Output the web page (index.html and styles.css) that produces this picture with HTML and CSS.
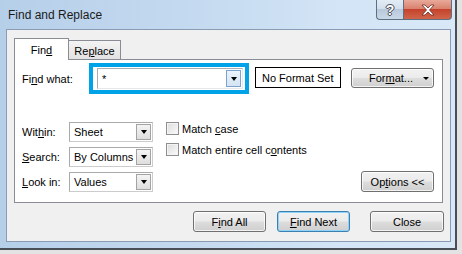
FILE: index.html
```html
<!DOCTYPE html>
<html>
<head>
<meta charset="utf-8">
<link rel="stylesheet" href="styles.css">
</head>
<body>
<div class="win">
  <div class="titlebar">
    <span class="title">Find and Replace</span>
    <div class="caption-btns">
      <div class="cbtn help">?</div>
      <div class="cbtn close">
        <svg width="16" height="12" viewBox="0 0 16 12"><path d="M2 1h3l3 3 3-3h3l-4.5 5 4.5 5h-3l-3-3-3 3h-3l4.5-5z" fill="#fff" stroke="#6b2a22" stroke-width="0.8" stroke-linejoin="round"/></svg>
      </div>
    </div>
  </div>
  <div class="client">
    <div class="tabs">
      <div class="tab active">Fin<u>d</u></div>
      <div class="tab">Re<u>p</u>lace</div>
    </div>
    <div class="panel">
      <div class="row1">
        <span class="lbl lbl-find">Fi<u>n</u>d what:</span>
        <div class="hl">
          <div class="combo wide"><span class="val">*</span><span class="ddbtn blue"><i class="tri"></i></span></div>
        </div>
        <div class="nfs">No Format Set</div>
        <div class="btn fmt"><span>For<u>m</u>at...</span><i class="tri small"></i></div>
      </div>
      <div class="lower">
        <div class="fields">
          <div class="frow"><span class="lbl">Wit<u>h</u>in:</span><div class="combo sel"><span class="val">Sheet</span><span class="ddbtn"><i class="tri"></i></span></div></div>
          <div class="frow"><span class="lbl"><u>S</u>earch:</span><div class="combo sel"><span class="val">By Columns</span><span class="ddbtn"><i class="tri"></i></span></div></div>
          <div class="frow"><span class="lbl"><u>L</u>ook in:</span><div class="combo sel"><span class="val">Values</span><span class="ddbtn"><i class="tri"></i></span></div></div>
        </div>
        <div class="checks">
          <div class="chk"><span class="box"></span><span>Match <u>c</u>ase</span></div>
          <div class="chk"><span class="box"></span><span>Match entire cell c<u>o</u>ntents</span></div>
        </div>
        <div class="btn opts">Op<u>t</u>ions &lt;&lt;</div>
      </div>
    </div>
    <div class="actions">
      <div class="btn act">F<u>i</u>nd All</div>
      <div class="btn act def"><u>F</u>ind Next</div>
      <div class="btn act close-btn">Close</div>
    </div>
  </div>
</div>
</body>
</html>
```
FILE: styles.css
```css
* { box-sizing: border-box; }
html, body { margin: 0; padding: 0; }
body {
  width: 462px;
  height: 254px;
  overflow: hidden;
  background: #e3e3e3;
  font-family: "Liberation Sans", Arial, sans-serif;
  font-size: 11px;
  color: #000;
}
u { text-decoration: underline; text-underline-offset: 1px; }

.win {
  width: 457px;
  height: 250px;
  background: linear-gradient(90deg, #b6cfe9 0%, #c3d9ef 40%, #d3e5f6 75%, #d8e8f7 100%);
  border-right: 2px solid #4a4f57;
  border-bottom: 2px solid #4a4f57;
  display: flex;
  flex-direction: column;
}
.titlebar {
  height: 29px;
  display: flex;
  justify-content: space-between;
  align-items: flex-start;
  padding-left: 8px;
  padding-right: 3px;
}
.title {
  font-size: 12px;
  line-height: 12px;
  margin-top: 9px;
  color: #1b1b1b;
}
.caption-btns { display: flex; }
.cbtn {
  height: 20px;
  display: flex;
  align-items: center;
  justify-content: center;
  border: 1px solid #5f6f82;
  border-top: none;
}
.help {
  width: 27px;
  border-right: none;
  border-bottom-left-radius: 4px;
  background: linear-gradient(#e3ecf5 0%, #d3dfec 45%, #b8c9dc 50%, #c9d8e7 100%);
  color: #fff;
  font-weight: bold;
  font-size: 14px;
  text-shadow: 0 0 1px #334, 1px 0 0 #556, -1px 0 0 #556, 0 1px 0 #556, 0 -1px 0 #556;
}
.close {
  width: 49px;
  border-bottom-right-radius: 4px;
  background: linear-gradient(#e9a99a 0%, #d9826f 45%, #c5432c 50%, #d0654c 100%);
}

.client {
  margin-left: 6px;
  margin-right: 4px;
  height: 213px;
  background: #f0f0f0;
  border: 1px solid #8a9cb3;
  display: flex;
  flex-direction: column;
}
.tabs {
  display: flex;
  align-items: flex-end;
  height: 21px;
  margin-top: 8px;
  margin-left: 7px;
}
.tab {
  border: 1px solid #898c95;
  border-bottom: none;
  display: flex;
  justify-content: center;
  align-items: center;
}
.tab.active {
  width: 55px;
  height: 22px;
  margin-bottom: -1px;
  background: #fff;
  position: relative;
  z-index: 1;
  padding-top: 1px;
}
.tab:not(.active) {
  width: 52px;
  height: 19px;
  border-left: none;
  background: linear-gradient(#f3f3f3, #e2e2e2);
  padding-top: 2px;
}
.panel {
  margin-left: 7px;
  width: 429px;
  height: 144px;
  background: #fff;
  border: 1px solid #898c95;
}
.row1 {
  display: flex;
  align-items: center;
  margin-top: 3px;
  padding-left: 7px;
}
.lbl-find { width: 67px; }
.hl {
  border: 4px solid #00a2e8;
  padding: 1px 2px 1px 4px;
}
.combo {
  display: flex;
  justify-content: space-between;
  align-items: stretch;
  border: 1px solid #abadb3;
  border-right-color: #e3e9ef;
  border-bottom-color: #e3e9ef;
  background: #fff;
  padding: 1px;
}
.combo.wide { width: 146px; height: 21px; }
.combo.sel { width: 84px; height: 20px; border-color: #aaa #ccc #ccc #aaa; }
.val { padding-left: 3px; align-self: center; }
.ddbtn {
  width: 15px;
  display: flex;
  align-items: center;
  justify-content: center;
  border: 1px solid #a3a3a3;
  background: linear-gradient(#f4f4f4, #dedede);
}
.ddbtn.blue {
  border-color: #7da2ce;
  background: linear-gradient(#ecf3fb, #d4e4f4);
}
.tri {
  width: 0; height: 0;
  border-left: 3.5px solid transparent;
  border-right: 3.5px solid transparent;
  border-top: 4px solid #000;
  display: block;
}
.tri.small {
  border-left-width: 3px;
  border-right-width: 3px;
  border-top-width: 3px;
}
.nfs {
  margin-left: 6px;
  width: 86px;
  height: 21px;
  border: 1px solid #000;
  padding-left: 6px;
  display: flex;
  align-items: center;
  margin-top: -2px;
}
.btn {
  height: 21px;
  border: 1px solid #707070;
  border-radius: 3px;
  background: linear-gradient(#f2f2f2 0%, #ebebeb 48%, #dddddd 52%, #cfcfcf 100%);
  box-shadow: inset 0 0 0 1px rgba(255,255,255,0.75);
  display: flex;
  align-items: center;
  justify-content: center;
}
.fmt {
  margin-left: 10px;
  width: 83px;
  height: 20px;
  justify-content: flex-end;
  gap: 10px;
  padding-right: 4px;
  margin-top: -1px;
}
.lower {
  display: flex;
  margin-top: 28px;
  padding-left: 7px;
}
.fields { display: flex; flex-direction: column; gap: 5px; }
.frow { display: flex; align-items: center; }
.frow .lbl { width: 47px; }
.checks {
  flex: 1;
  margin-left: 13px;
  display: flex;
  flex-direction: column;
  gap: 8px;
}
.chk { display: flex; align-items: center; gap: 3px; height: 13px; }
.box {
  width: 13px; height: 13px;
  border: 1px solid #8f8f8f;
  background: linear-gradient(135deg, #dcdcdc, #fbfbfb);
  box-shadow: inset 0 0 0 1px #f4f4f4;
}
.opts {
  align-self: flex-end;
  width: 73px;
  margin-right: 8px;
}
.actions {
  display: flex;
  justify-content: flex-end;
  margin-top: 8px;
  padding-right: 6px;
}
.act { width: 73px; }
.act.def {
  margin-left: 11px;
  border-color: #3c7fb1;
  box-shadow: inset 0 0 0 1px #8fd3f6;
}
.close-btn { margin-left: 20px; width: 74px; }
```
